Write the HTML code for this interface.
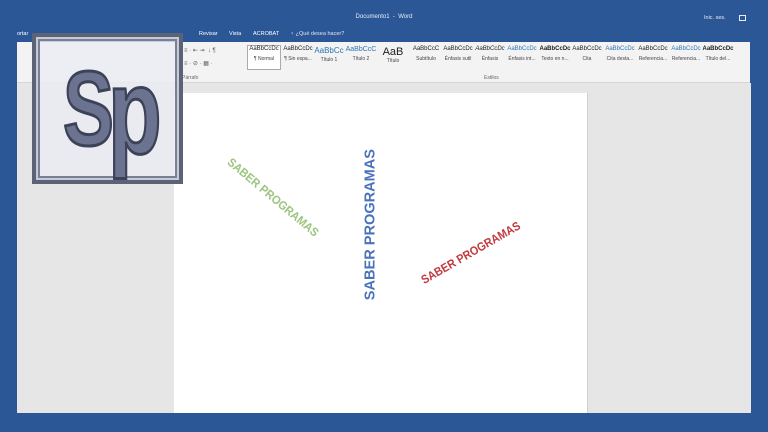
<!DOCTYPE html>
<html><head><meta charset="utf-8"><style>
*{margin:0;padding:0;box-sizing:border-box}
body{width:768px;height:432px;background:#2b5797;position:relative;overflow:hidden;font-family:"Liberation Sans",sans-serif}
.abs{position:absolute}
.title{left:0;top:14px;width:768px;text-align:center;color:#e8eef8;font-size:6px}
.tabs{top:31px;font-size:5.5px;color:#fff}
.ribbon{left:17px;top:42px;width:733px;height:41px;background:#f3f3f3;border-bottom:1px solid #d6d6d6}
.work{left:17px;top:83px;width:734px;height:330px;background:#e6e6e6}
.page{left:174px;top:93px;width:414px;height:320px;background:#fff;border-right:1px solid #d0d0d0}
.sty{top:46px;height:26px;font-size:5px;color:#444;text-align:center}
.sty b{display:block;font-weight:normal;font-size:6px;color:#222;margin-bottom:4px}
.t{font-weight:bold;font-size:12px;white-space:nowrap;transform-origin:center;text-align:center}
.L{font-family:"Liberation Sans",sans-serif;font-weight:bold;color:#6b7390;-webkit-text-stroke:3px #3c4258;line-height:1}
</style></head><body>
<div class="abs title">Documento1 &nbsp;-&nbsp; Word</div>
<div class="abs" style="left:704px;top:15px;color:#e8eef8;font-size:5.5px">Inic. ses.</div>
<div class="abs" style="left:739px;top:15px;width:7px;height:6px;border:1px solid #e8eef8"></div>
<div class="abs tabs" style="left:17px">ortar</div>
<div class="abs tabs" style="left:199px">Revisar</div>
<div class="abs tabs" style="left:229px">Vista</div>
<div class="abs tabs" style="left:253px">ACROBAT</div>
<div class="abs tabs" style="left:290px;color:#dfe7f3">♀ ¿Qué desea hacer?</div>
<div class="abs ribbon"></div>
<div class="abs" style="left:247px;top:45px;width:34px;height:25px;border:1px solid #aaa;background:#fff"></div>
<div class="abs sty" style="left:248px;width:32px"><b>AaBbCcDc</b>¶ Normal</div>
<div class="abs sty" style="left:282px;width:32px"><b>AaBbCcDc</b>¶ Sin espa...</div>
<div class="abs sty" style="left:314px;width:30px"><b style="font-size:8px;color:#2e74b5;margin-bottom:2px">AaBbCc</b>Título 1</div>
<div class="abs sty" style="left:345px;width:32px"><b style="font-size:7px;color:#2e74b5;margin-bottom:3px">AaBbCcC</b>Título 2</div>
<div class="abs sty" style="left:377px;width:32px"><b style="font-size:11px;margin-bottom:0">AaB</b>Título</div>
<div class="abs sty" style="left:410px;width:32px"><b>AaBbCcC</b>Subtítulo</div>
<div class="abs sty" style="left:442px;width:32px"><b>AaBbCcDc</b>Énfasis sutil</div>
<div class="abs sty" style="left:474px;width:32px"><b style="font-style:italic">AaBbCcDc</b>Énfasis</div>
<div class="abs sty" style="left:506px;width:32px"><b style="color:#2e74b5">AaBbCcDc</b>Énfasis int...</div>
<div class="abs sty" style="left:538px;width:34px"><b style="font-weight:bold">AaBbCcDc</b>Texto en n...</div>
<div class="abs sty" style="left:572px;width:30px"><b>AaBbCcDc</b>Cita</div>
<div class="abs sty" style="left:603px;width:34px"><b style="color:#2e74b5">AaBbCcDc</b>Cita desta...</div>
<div class="abs sty" style="left:636px;width:34px"><b>AaBbCcDc</b>Referencia...</div>
<div class="abs sty" style="left:669px;width:34px"><b style="color:#2e74b5">AaBbCcDc</b>Referencia...</div>
<div class="abs sty" style="left:701px;width:34px"><b style="font-weight:bold">AaBbCcDc</b>Título del...</div>
<div class="abs" style="left:484px;top:75px;font-size:5px;color:#666">Estilos</div>
<div class="abs" style="left:182px;top:75px;font-size:5px;color:#666">Párrafo</div>
<div class="abs" style="left:184px;top:47px;font-size:6px;color:#666">≡ · ⇤ ⇥ &nbsp;↓ ¶</div>
<div class="abs" style="left:184px;top:60px;font-size:6px;color:#666">≡ · ⊘ · ▦ ·</div>
<div class="abs work"></div>
<div class="abs page"></div>
<div class="abs t" style="left:213px;top:186px;width:110px;color:#9bc57f;transform:rotate(40deg) scaleX(0.92)">SABER PROGRAMAS</div>
<div class="abs t" style="left:293px;top:217px;width:154px;color:#4a73b9;font-size:15px;transform:rotate(-90deg) scaleX(0.97)">SABER PROGRAMAS</div>
<div class="abs t" style="left:410px;top:249px;width:110px;color:#c0393e;transform:rotate(-30deg) scaleX(0.9)">SABER PROGRAMAS</div>
<div class="abs" style="left:32px;top:33px;width:151px;height:151px;background:rgba(235,236,242,0.8);border:4px solid #5b6378;box-shadow:inset 0 0 0 2px #c8cad4, inset 0 0 0 4px #7a8096"></div>
<div class="abs L" style="left:63px;top:56px;font-size:106px;transform:scaleX(0.72);transform-origin:left top">S</div>
<div class="abs L" style="left:108px;top:50px;font-size:122px;transform:scaleX(0.72);transform-origin:left top">p</div>
</body></html>
